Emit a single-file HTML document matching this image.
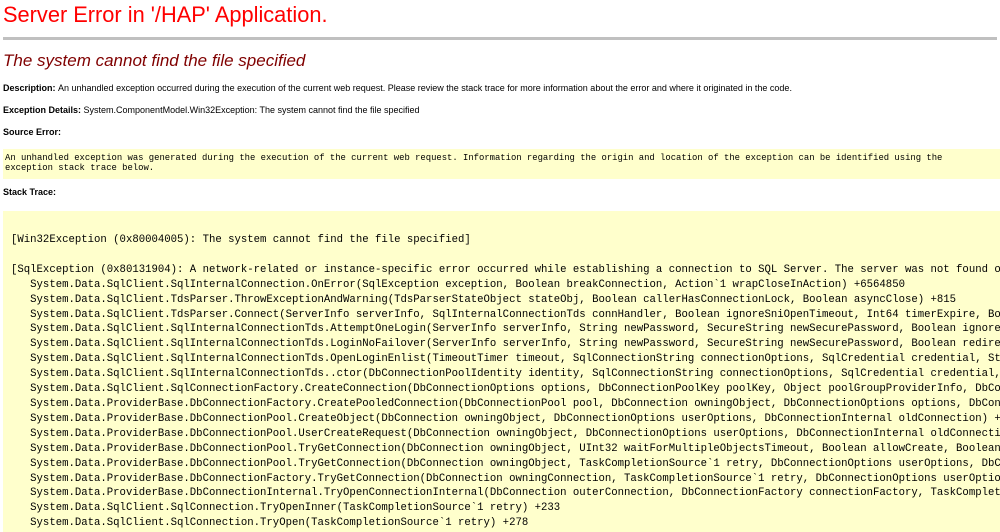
<!DOCTYPE html>
<html><head><meta charset="utf-8"><style>
html,body{margin:0;padding:0;width:1000px;height:532px;overflow:hidden;background:#fff;font-family:"Liberation Sans",Arial,sans-serif;}
.a{position:absolute;white-space:pre;}
h1{position:absolute;left:3px;top:2px;margin:0;font-weight:normal;font-size:21.8px;color:#ff0000;}
.hr{position:absolute;left:3px;top:37px;width:994px;height:3px;background:#c0c0c0;}
h2{position:absolute;left:3px;top:51px;margin:0;font-weight:normal;font-style:italic;font-size:17px;color:#800000;}
.s{font-size:9px;color:#000;}
.s b{font-weight:bold;}
.box1{position:absolute;left:3px;top:149px;width:997px;height:30px;background:#ffffcc;}
.box2{position:absolute;left:3px;top:211px;width:997px;height:321px;background:#ffffcc;}
.m1{font-family:"Liberation Mono","DejaVu Sans Mono",monospace;font-size:8.9px;line-height:10.3px;color:#000;}
.m2{font-family:"Liberation Mono","DejaVu Sans Mono",monospace;font-size:10.65px;line-height:14.9px;color:#000;}
</style></head><body>
<h1>Server Error in '/HAP' Application.</h1>
<div class="hr"></div>
<h2>The system cannot find the file specified</h2>
<div class="a s" style="left:3px;top:83px"><b>Description: </b>An unhandled exception occurred during the execution of the current web request. Please review the stack trace for more information about the error and where it originated in the code.</div>
<div class="a s" style="left:3px;top:105px"><b>Exception Details: </b>System.ComponentModel.Win32Exception: The system cannot find the file specified</div>
<div class="a s" style="left:3px;top:127px"><b>Source Error:</b></div>
<div class="box1"></div>
<div class="a m1" style="left:5px;top:153px">An unhandled exception was generated during the execution of the current web request. Information regarding the origin and location of the exception can be identified using the
exception stack trace below.</div>
<div class="a s" style="left:3px;top:187px"><b>Stack Trace:</b></div>
<div class="box2"></div>
<div class="a m2" style="left:11px;top:233px;width:989px;height:299px;overflow:hidden">[Win32Exception (0x80004005): The system cannot find the file specified]

[SqlException (0x80131904): A network-related or instance-specific error occurred while establishing a connection to SQL Server. The server was not found or
   System.Data.SqlClient.SqlInternalConnection.OnError(SqlException exception, Boolean breakConnection, Action`1 wrapCloseInAction) +6564850
   System.Data.SqlClient.TdsParser.ThrowExceptionAndWarning(TdsParserStateObject stateObj, Boolean callerHasConnectionLock, Boolean asyncClose) +815
   System.Data.SqlClient.TdsParser.Connect(ServerInfo serverInfo, SqlInternalConnectionTds connHandler, Boolean ignoreSniOpenTimeout, Int64 timerExpire, Boolean
   System.Data.SqlClient.SqlInternalConnectionTds.AttemptOneLogin(ServerInfo serverInfo, String newPassword, SecureString newSecurePassword, Boolean ignoreSni
   System.Data.SqlClient.SqlInternalConnectionTds.LoginNoFailover(ServerInfo serverInfo, String newPassword, SecureString newSecurePassword, Boolean redirected
   System.Data.SqlClient.SqlInternalConnectionTds.OpenLoginEnlist(TimeoutTimer timeout, SqlConnectionString connectionOptions, SqlCredential credential, Strin
   System.Data.SqlClient.SqlInternalConnectionTds..ctor(DbConnectionPoolIdentity identity, SqlConnectionString connectionOptions, SqlCredential credential, Ob
   System.Data.SqlClient.SqlConnectionFactory.CreateConnection(DbConnectionOptions options, DbConnectionPoolKey poolKey, Object poolGroupProviderInfo, DbConnec
   System.Data.ProviderBase.DbConnectionFactory.CreatePooledConnection(DbConnectionPool pool, DbConnection owningObject, DbConnectionOptions options, DbConnect
   System.Data.ProviderBase.DbConnectionPool.CreateObject(DbConnection owningObject, DbConnectionOptions userOptions, DbConnectionInternal oldConnection) +
   System.Data.ProviderBase.DbConnectionPool.UserCreateRequest(DbConnection owningObject, DbConnectionOptions userOptions, DbConnectionInternal oldConnection)
   System.Data.ProviderBase.DbConnectionPool.TryGetConnection(DbConnection owningObject, UInt32 waitForMultipleObjectsTimeout, Boolean allowCreate, Boolean on
   System.Data.ProviderBase.DbConnectionPool.TryGetConnection(DbConnection owningObject, TaskCompletionSource`1 retry, DbConnectionOptions userOptions, DbConn
   System.Data.ProviderBase.DbConnectionFactory.TryGetConnection(DbConnection owningConnection, TaskCompletionSource`1 retry, DbConnectionOptions userOptions,
   System.Data.ProviderBase.DbConnectionInternal.TryOpenConnectionInternal(DbConnection outerConnection, DbConnectionFactory connectionFactory, TaskCompletionS
   System.Data.SqlClient.SqlConnection.TryOpenInner(TaskCompletionSource`1 retry) +233
   System.Data.SqlClient.SqlConnection.TryOpen(TaskCompletionSource`1 retry) +278</div>
</body></html>
